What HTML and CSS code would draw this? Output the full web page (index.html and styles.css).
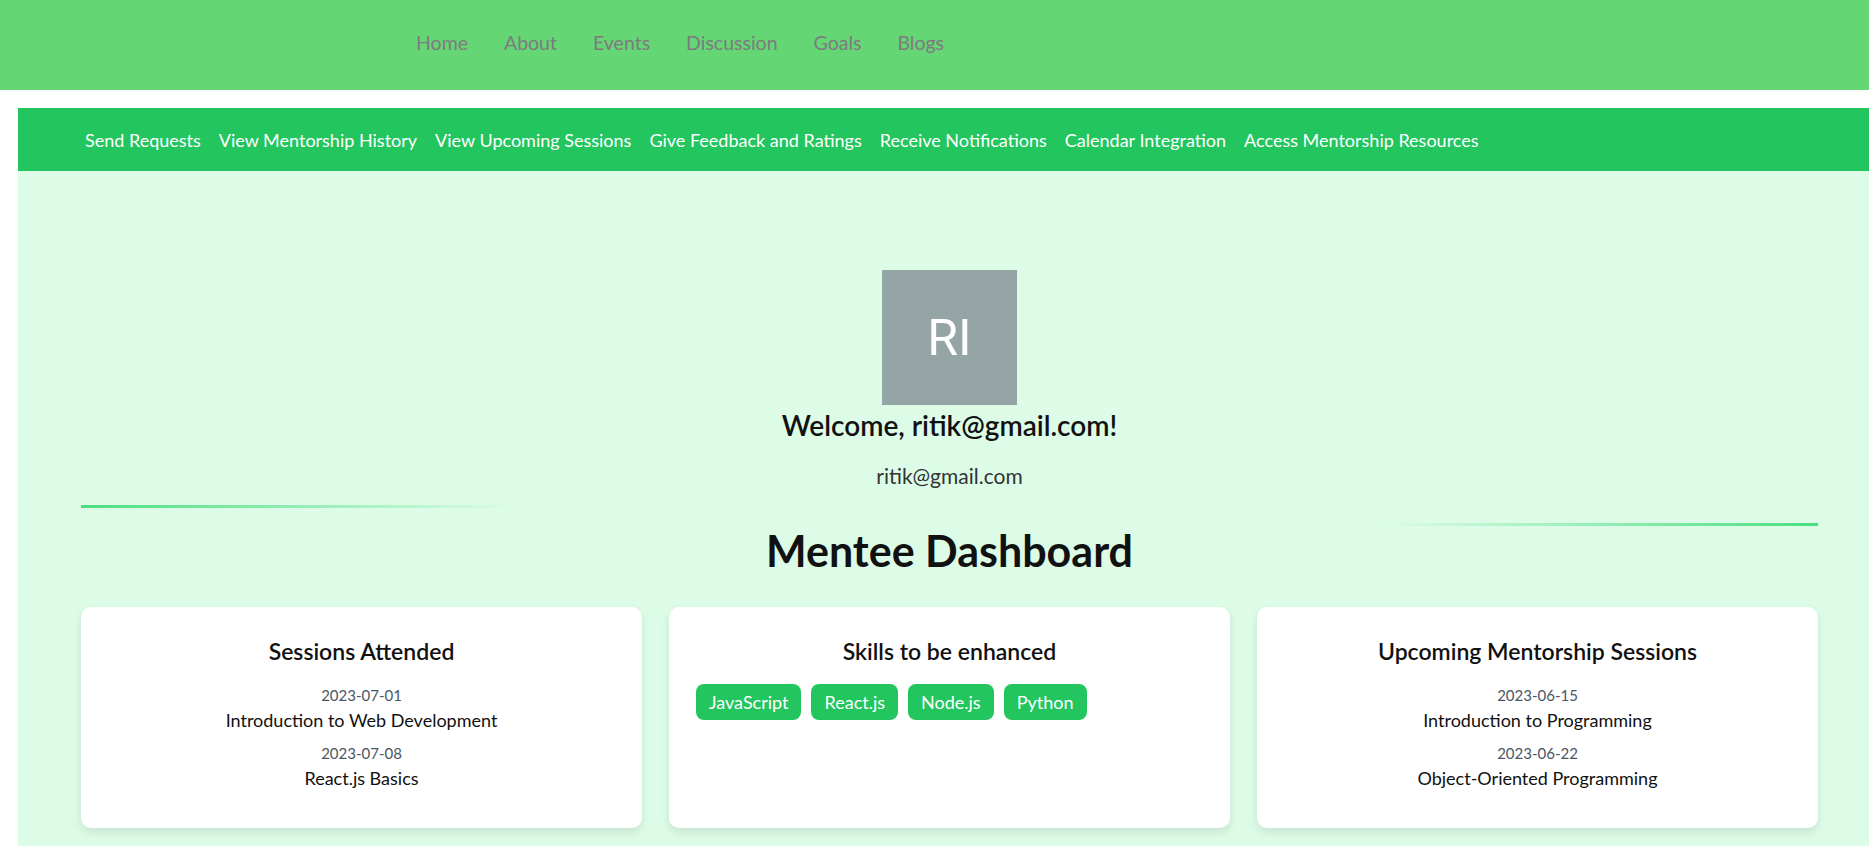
FILE: index.html
```html
<!DOCTYPE html>
<html lang="en">
<head>
    <meta charset="UTF-8">
    <meta name="viewport" content="width=device-width, initial-scale=1.0">
    <title>Mentee Dashboard</title>
    <link rel="stylesheet" href="styles.css">
</head>
<body>
    <header class="topbar">
        <nav class="topbar-links">
            <a href="#">Home</a>
            <a href="#">About</a>
            <a href="#">Events</a>
            <a href="#">Discussion</a>
            <a href="#">Goals</a>
            <a href="#">Blogs</a>
        </nav>
    </header>

    <div class="page">
        <nav class="subnav">
            <a href="#">Send Requests</a>
            <a href="#">View Mentorship History</a>
            <a href="#">View Upcoming Sessions</a>
            <a href="#">Give Feedback and Ratings</a>
            <a href="#">Receive Notifications</a>
            <a href="#">Calendar Integration</a>
            <a href="#">Access Mentorship Resources</a>
        </nav>

        <main class="content">
            <section class="profile">
                <div class="avatar">RI</div>
                <h2 class="welcome">Welcome, ritik@gmail.com!</h2>
                <p class="email">ritik@gmail.com</p>
            </section>

            <hr class="divider divider-left">
            <hr class="divider divider-right">

            <h1 class="dashboard-title">Mentee Dashboard</h1>

            <div class="card-grid">
                <div class="card">
                    <h3>Sessions Attended</h3>
                    <ul class="session-list">
                        <li>
                            <span class="session-date">2023-07-01</span>
                            <span class="session-name">Introduction to Web Development</span>
                        </li>
                        <li>
                            <span class="session-date">2023-07-08</span>
                            <span class="session-name">React.js Basics</span>
                        </li>
                    </ul>
                </div>

                <div class="card">
                    <h3>Skills to be enhanced</h3>
                    <div class="skills">
                        <span class="skill">JavaScript</span>
                        <span class="skill">React.js</span>
                        <span class="skill">Node.js</span>
                        <span class="skill">Python</span>
                    </div>
                </div>

                <div class="card">
                    <h3>Upcoming Mentorship Sessions</h3>
                    <ul class="session-list">
                        <li>
                            <span class="session-date">2023-06-15</span>
                            <span class="session-name">Introduction to Programming</span>
                        </li>
                        <li>
                            <span class="session-date">2023-06-22</span>
                            <span class="session-name">Object-Oriented Programming</span>
                        </li>
                    </ul>
                </div>
            </div>
        </main>
    </div>
</body>
</html>
```

FILE: styles.css
```css
:root {
    --green-top: #64d674;
    --green: #22c55e;
    --green-light: #dcfce7;
    --green-line: #4ade80;
}

* {
    box-sizing: border-box;
}

body {
    margin: 0;
    background: #fff;
    font-family: "Lato", "Noto Sans", sans-serif;
    color: #111;
}

a {
    text-decoration: none;
}

.topbar {
    height: 90px;
    background-color: var(--green-top);
    display: flex;
    align-items: center;
    padding: 0 0 5px 416px;
}

.topbar-links {
    display: flex;
    gap: 36px;
}

.topbar-links a {
    color: #7f7a80;
    font-size: 19.5px;
}

.page {
    margin: 18px 0 0 18px;
}

.subnav {
    height: 63px;
    background-color: var(--green);
    display: flex;
    align-items: center;
    gap: 18px;
    padding-left: 67px;
}

.subnav a {
    color: #fff;
    font-size: 18px;
}

.content {
    background-color: var(--green-light);
    padding: 99px 51px 40px 63px;
    min-height: 680px;
}

.profile {
    text-align: center;
}

.avatar {
    width: 135px;
    height: 135px;
    margin: 0 auto;
    background-color: #95a5a6;
    color: #fff;
    font-family: "Roboto", sans-serif;
    font-size: 50px;
    display: flex;
    align-items: center;
    justify-content: center;
}

.welcome {
    margin: 0;
    font-size: 28px;
    font-weight: 600;
    line-height: 40px;
}

.email {
    margin: 18px 0 0;
    font-size: 21px;
    line-height: 26px;
    color: #333;
}

.divider {
    width: 25%;
    height: 3px;
    border: none;
    margin: 0;
}

.divider-left {
    margin-top: 16px;
    background: linear-gradient(to right, var(--green-line), rgba(220, 252, 231, 0.4));
}

.divider-right {
    margin: 15px 0 0 auto;
    background: linear-gradient(to right, rgba(220, 252, 231, 0.4), var(--green-line));
}

.dashboard-title {
    margin: 0;
    text-align: center;
    font-size: 43px;
    font-weight: 700;
    line-height: 50px;
}

.card-grid {
    display: grid;
    grid-template-columns: repeat(3, 1fr);
    gap: 27px;
    margin-top: 31px;
}

.card {
    background: #fff;
    border-radius: 10px;
    padding: 28px 27px 24px;
    height: 221px;
    box-shadow: 0 4px 8px rgba(0, 0, 0, 0.1);
}

.card h3 {
    margin: 0 0 17px;
    text-align: center;
    font-size: 23px;
    font-weight: 600;
    line-height: 32px;
}

.session-list {
    list-style: none;
    margin: 0;
    padding: 0;
    text-align: center;
}

.session-list li {
    display: flex;
    flex-direction: column;
    margin-bottom: 8px;
}

.session-date {
    font-size: 15px;
    color: #4b5563;
    line-height: 22px;
}

.session-name {
    font-size: 18px;
    line-height: 28px;
}

.skills {
    display: flex;
    flex-wrap: wrap;
    gap: 10px;
}

.skill {
    background-color: var(--green);
    color: #fff;
    font-size: 18px;
    padding: 0 13px;
    height: 36px;
    line-height: 36px;
    border-radius: 8px;
}
```
